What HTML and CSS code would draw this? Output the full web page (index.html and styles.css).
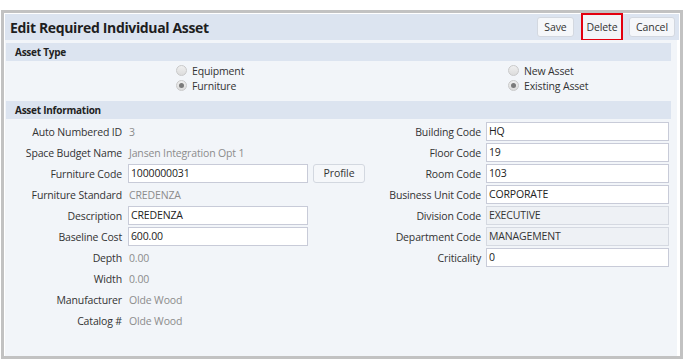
FILE: index.html
```html
<!DOCTYPE html>
<html lang="en">
<head>
<meta charset="utf-8">
<title>Edit Required Individual Asset</title>
<link rel="stylesheet" href="styles.css">
</head>
<body>
<div class="frame">
  <div class="titlebar">
    <h1 class="title">Edit Required Individual Asset</h1>
    <div class="actions">
      <button class="btn btn-save">Save</button>
      <button class="btn btn-delete">Delete</button>
      <button class="btn btn-cancel">Cancel</button>
    </div>
  </div>
  <div class="body">
    <div class="section-head">Asset Type</div>
    <div class="radio-row">
      <div class="radio-group group-left">
        <div class="radio"><span class="dot"></span>Equipment</div>
        <div class="radio"><span class="dot on"></span>Furniture</div>
      </div>
      <div class="radio-group group-right">
        <div class="radio"><span class="dot"></span>New Asset</div>
        <div class="radio"><span class="dot on"></span>Existing Asset</div>
      </div>
    </div>
    <div class="section-head">Asset Information</div>
    <div class="info">
      <div class="col col-left">
        <div class="lbl">Auto Numbered ID</div><div class="val">3</div>
        <div class="lbl">Space Budget Name</div><div class="val">Jansen Integration Opt 1</div>
        <div class="lbl">Furniture Code</div><div class="val-field"><div class="input w180">1000000031</div><button class="btn btn-profile">Profile</button></div>
        <div class="lbl">Furniture Standard</div><div class="val">CREDENZA</div>
        <div class="lbl">Description</div><div class="val-field"><div class="input w180">CREDENZA</div></div>
        <div class="lbl">Baseline Cost</div><div class="val-field"><div class="input w180">600.00</div></div>
        <div class="lbl">Depth</div><div class="val">0.00</div>
        <div class="lbl">Width</div><div class="val">0.00</div>
        <div class="lbl">Manufacturer</div><div class="val">Olde Wood</div>
        <div class="lbl">Catalog #</div><div class="val">Olde Wood</div>
      </div>
      <div class="col col-right">
        <div class="lbl">Building Code</div><div class="val-field"><div class="input w183">HQ</div></div>
        <div class="lbl">Floor Code</div><div class="val-field"><div class="input w183">19</div></div>
        <div class="lbl">Room Code</div><div class="val-field"><div class="input w183">103</div></div>
        <div class="lbl">Business Unit Code</div><div class="val-field"><div class="input w183">CORPORATE</div></div>
        <div class="lbl">Division Code</div><div class="val-field"><div class="input w183 disabled">EXECUTIVE</div></div>
        <div class="lbl">Department Code</div><div class="val-field"><div class="input w183 disabled">MANAGEMENT</div></div>
        <div class="lbl">Criticality</div><div class="val-field"><div class="input w183">0</div></div>
      </div>
    </div>
  </div>
</div>
</body>
</html>
```

FILE: styles.css
```css
* { box-sizing: border-box; }
html, body { margin: 0; padding: 0; background: #ffffff; }
body {
  padding: 10px 0 0 1px;
  font-family: "Open Sans", "Noto Sans", sans-serif;
  font-size: 10.5px;
  letter-spacing: -0.15px;
  color: #333333;
}
.frame {
  width: 682px;
  height: 349px;
  border: 3px solid #c2c2c2;
  padding: 1px 1px 0 1px;
  background: #ffffff;
  display: flex;
  flex-direction: column;
}
.titlebar {
  height: 26px;
  flex: none;
  background: #dce4f0;
  display: flex;
  align-items: center;
  justify-content: space-between;
  padding: 0 4px 0 5px;
  width: 674px;
}
.title {
  margin: 0;
  font-size: 14px;
  font-weight: 700;
  color: #1e1e1e;
  letter-spacing: -0.35px;
}
.actions { display: flex; align-items: center; }
.btn {
  font-family: inherit;
  font-size: 10.5px;
  letter-spacing: -0.1px;
  color: #333333;
  background: #f5f7fa;
  border: 1px solid #d3d8e0;
  border-radius: 3px;
  height: 20px;
  padding: 0;
  line-height: 18px;
  text-align: center;
}
.btn-save { width: 37px; margin-right: 7px; }
.btn-delete {
  width: 42px;
  height: 28px;
  border: 2px solid #e3000f;
  border-radius: 0;
  background: #f2f4f8;
  margin-right: 6px;
}
.btn-cancel { width: 46px; }
.body {
  flex: 1;
  background: #f2f5f9;
  width: 672px;
  padding-top: 3px;
}
.section-head {
  height: 18px;
  background: #dce4f0;
  margin: 0 6px 0 1px;
  padding-left: 9px;
  font-size: 10px;
  font-weight: 700;
  letter-spacing: -0.25px;
  color: #222222;
  line-height: 18px;
}
.radio-row {
  display: flex;
  height: 40px;
  padding-top: 2px;
}
.radio-group { display: flex; flex-direction: column; }
.group-left { margin-left: 171px; width: 332px; }
.radio {
  height: 15px;
  display: flex;
  align-items: center;
  color: #333333;
}
.dot {
  width: 11px;
  height: 11px;
  border-radius: 50%;
  border: 1px solid #c9c9c9;
  background: linear-gradient(#efefef, #dcdcdc);
  margin-right: 5px;
  display: flex;
  align-items: center;
  justify-content: center;
}
.dot.on::after {
  content: "";
  width: 5px;
  height: 5px;
  border-radius: 50%;
  background: #7a7a7a;
}
.info {
  display: flex;
  padding-top: 2px;
}
.col {
  display: grid;
  grid-auto-rows: 21px;
  align-items: center;
}
.col-left {
  width: 365px;
  grid-template-columns: 117px 1fr;
  column-gap: 6px;
}
.col-right {
  grid-template-columns: 111px 1fr;
  column-gap: 5px;
}
.lbl {
  text-align: right;
  color: #333333;
  white-space: nowrap;
}
.val {
  color: #8c8c8c;
  padding-left: 1px;
}
.val-field { display: flex; align-items: center; }
.input {
  height: 19px;
  background: #ffffff;
  border: 1px solid #c8cbd8;
  padding-left: 2px;
  line-height: 17px;
  color: #222222;
}
.input.disabled {
  background: #eef1f5;
  border-color: #d5d9e1;
  color: #333333;
}
.w180 { width: 180px; }
.w183 { width: 183px; }
.btn-profile { width: 52px; height: 19px; margin-left: 5px; line-height: 17px; }
```
